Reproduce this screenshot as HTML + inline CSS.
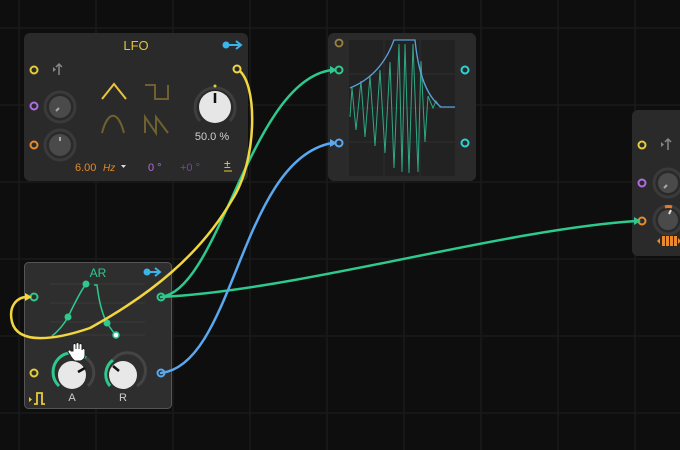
<!DOCTYPE html>
<html><head><meta charset="utf-8"><style>
html,body{margin:0;padding:0;background:#0e0e0e;width:680px;height:450px;overflow:hidden}
svg{display:block}
text{font-family:"Liberation Sans",sans-serif}
</style></head><body>
<svg width="680" height="450" viewBox="0 0 680 450" xmlns="http://www.w3.org/2000/svg">
<rect width="680" height="450" fill="#0e0e0e"/>
<g stroke="#1a1a1a" stroke-width="1.5">
<line x1="19" y1="0" x2="19" y2="450"/><line x1="96" y1="0" x2="96" y2="450"/><line x1="173" y1="0" x2="173" y2="450"/><line x1="250" y1="0" x2="250" y2="450"/><line x1="327" y1="0" x2="327" y2="450"/><line x1="404" y1="0" x2="404" y2="450"/><line x1="481" y1="0" x2="481" y2="450"/><line x1="558" y1="0" x2="558" y2="450"/><line x1="635" y1="0" x2="635" y2="450"/>
<line x1="0" y1="28" x2="680" y2="28"/><line x1="0" y1="105" x2="680" y2="105"/><line x1="0" y1="182" x2="680" y2="182"/><line x1="0" y1="259" x2="680" y2="259"/><line x1="0" y1="336" x2="680" y2="336"/><line x1="0" y1="413" x2="680" y2="413"/>
</g>

<!-- LFO panel -->
<rect x="24" y="33" width="224" height="148" rx="6" fill="#2a2a2a"/>
<text x="136" y="50" fill="#e0c23c" font-size="13" text-anchor="middle">LFO</text>
<circle cx="226" cy="45" r="3.5" fill="#3bb4e8"/><line x1="226" y1="45" x2="240" y2="45" stroke="#3bb4e8" stroke-width="2"/><path d="M236,41 L241,45 L236,49" fill="none" stroke="#3bb4e8" stroke-width="2"/>
<circle cx="34" cy="70" r="3.5" fill="none" stroke="#e6cc38" stroke-width="2"/>
<path d="M53,67 l3,2.5 l-3,2.5z" fill="#888"/><line x1="59" y1="64" x2="59" y2="75" stroke="#888" stroke-width="1.5"/><path d="M56,67 l3,-3 l3,3" fill="none" stroke="#888" stroke-width="1.5"/>
<circle cx="34" cy="106" r="3.5" fill="none" stroke="#b06ce0" stroke-width="2"/>
<circle cx="34" cy="145" r="3.5" fill="none" stroke="#ea8a2a" stroke-width="2"/>
<circle cx="60" cy="107" r="15" fill="none" stroke="#3a3a3a" stroke-width="3"/>
<circle cx="60" cy="107" r="11" fill="#4a4a4a"/><line x1="56" y1="111" x2="59" y2="108" stroke="#aaa" stroke-width="2"/>
<circle cx="60" cy="145" r="15" fill="none" stroke="#3a3a3a" stroke-width="3"/>
<circle cx="60" cy="145" r="11" fill="#4a4a4a"/><line x1="60" y1="137" x2="60" y2="141" stroke="#aaa" stroke-width="2"/>
<path d="M102,99 L114,84 L126,99" fill="none" stroke="#e8c43a" stroke-width="2"/>
<path d="M145,85 L155,85 L155,99 L168,99 L168,85" fill="none" stroke="#6e6130" stroke-width="2"/>
<path d="M102,133 C108,110 118,110 124,133" fill="none" stroke="#6e6130" stroke-width="2"/>
<path d="M145,133 L145,117 L156,133 L156,117 L168,133" fill="none" stroke="#6e6130" stroke-width="2"/>
<path d="M200,121 A20,20 0 1 1 230,121" fill="none" stroke="#3e3e3e" stroke-width="3"/>
<circle cx="215" cy="107" r="16" fill="#e6e6e6"/><line x1="215" y1="93" x2="215" y2="103" stroke="#111" stroke-width="2.5"/>
<circle cx="215" cy="86" r="1.5" fill="#e6cc38"/>
<text x="212" y="140" fill="#cfcfcf" font-size="11" text-anchor="middle">50.0 %</text>
<text x="75" y="171" fill="#e08a2a" font-size="11">6.00</text>
<text x="103" y="171" fill="#e08a2a" font-size="10" font-style="italic">Hz</text>
<path d="M121,165 l5,0 l-2.5,3z" fill="#ddd"/>
<text x="148" y="171" fill="#b06ce0" font-size="11">0 °</text>
<text x="180" y="171" fill="#6e4c88" font-size="11">+0 °</text>
<text x="224" y="168" fill="#e6cc38" font-size="12">±</text><line x1="224" y1="171" x2="232" y2="171" stroke="#e6cc38" stroke-width="1"/>

<!-- Scope panel -->
<rect x="328" y="33" width="148" height="148" rx="6" fill="#2a2a2a"/>
<rect x="349" y="40" width="106" height="136" fill="#222"/>
<g stroke="#2e2e2e" stroke-width="1"><line x1="349" y1="74" x2="455" y2="74"/><line x1="349" y1="108" x2="455" y2="108"/><line x1="349" y1="142" x2="455" y2="142"/><line x1="384" y1="40" x2="384" y2="176"/><line x1="420" y1="40" x2="420" y2="176"/></g>
<path d="M350,117 L352,88 L356,130 L361,81 L365,137 L370,76 L375,146 L380,70 L385,153 L390,62 L394,168 L399,44 L402,172 L405,44 L409,173 L413,44 L418,172 L421,61 L425,142 L428,96 L433,108 L436,101 L440,107 L455,107" fill="none" stroke="#2ea884" stroke-width="1"/>
<path d="M350,88 C370,80 385,65 394,40 L415,40 C418,70 425,95 441,107 L455,107" fill="none" stroke="#5aa0d8" stroke-width="1.3"/>
<circle cx="339" cy="43" r="3.5" fill="none" stroke="#9a8240" stroke-width="1.8"/>
<circle cx="339" cy="70" r="3.5" fill="none" stroke="#2dc98d" stroke-width="2"/>
<circle cx="339" cy="143" r="3.5" fill="none" stroke="#5aa8f0" stroke-width="2"/>
<circle cx="465" cy="70" r="3.5" fill="none" stroke="#2fd2d2" stroke-width="2"/>
<circle cx="465" cy="143" r="3.5" fill="none" stroke="#2fd2d2" stroke-width="2"/>

<!-- Right panel -->
<rect x="632" y="110" width="60" height="146" rx="6" fill="#2a2a2a"/>
<circle cx="642" cy="145" r="3.5" fill="none" stroke="#e6cc38" stroke-width="2"/>
<path d="M661,142 l3,2.5 l-3,2.5z" fill="#888"/><line x1="668" y1="139" x2="668" y2="150" stroke="#888" stroke-width="1.5"/><path d="M665,142 l3,-3 l3,3" fill="none" stroke="#888" stroke-width="1.5"/>
<circle cx="642" cy="183" r="3.5" fill="none" stroke="#b06ce0" stroke-width="2"/>
<circle cx="642" cy="221" r="3.5" fill="none" stroke="#ea8a2a" stroke-width="2"/>
<circle cx="668" cy="183" r="14" fill="none" stroke="#3a3a3a" stroke-width="3"/><circle cx="668" cy="183" r="10" fill="#4a4a4a"/>
<line x1="664" y1="188" x2="667" y2="185" stroke="#aaa" stroke-width="2"/>
<circle cx="668" cy="220" r="14" fill="none" stroke="#3a3a3a" stroke-width="3"/><circle cx="668" cy="220" r="10" fill="#4a4a4a"/>
<line x1="669" y1="214" x2="671" y2="210" stroke="#ddd" stroke-width="2"/>
<path d="M665,207 A14,14 0 0 1 672,207" stroke="#ea7a2a" stroke-width="3" fill="none"/>
<g fill="#ea8a2a"><rect x="662" y="236" width="3" height="10"/><rect x="666" y="236" width="3" height="10"/><rect x="670" y="236" width="3" height="10"/><rect x="674" y="236" width="3" height="10"/></g>
<path d="M657,241 l3,-3 v6z M681,241 l-3,-3 v6z" fill="#ea8a2a"/>

<!-- AR panel -->
<rect x="24.5" y="262.5" width="147" height="146" rx="4" fill="#2e2e2e" stroke="#555" stroke-width="1"/>
<text x="98" y="277" fill="#2dc98d" font-size="12" text-anchor="middle">AR</text>
<circle cx="147" cy="272" r="3.5" fill="#3bb4e8"/><line x1="147" y1="272" x2="159" y2="272" stroke="#3bb4e8" stroke-width="2"/><path d="M155,268 L160,272 L155,276" fill="none" stroke="#3bb4e8" stroke-width="2"/>
<g stroke="#3a3a3a" stroke-width="1"><line x1="50" y1="284" x2="145" y2="284"/><line x1="50" y1="303" x2="145" y2="303"/><line x1="50" y1="322" x2="145" y2="322"/><line x1="50" y1="335" x2="145" y2="335"/></g>
<path d="M52,336 Q62,328 68,317 Q80,292 86,284" fill="none" stroke="#2dc98d" stroke-width="1.5"/>
<path d="M94,285 L97,285 Q100,310 107,323 L116,336" fill="none" stroke="#2dc98d" stroke-width="1.5"/>
<circle cx="86" cy="284" r="3.5" fill="#2dc98d"/><circle cx="68" cy="317" r="3.5" fill="#2dc98d"/><circle cx="107" cy="323" r="3.5" fill="#2dc98d"/>
<circle cx="116" cy="335" r="3" fill="#fff" stroke="#2dc98d" stroke-width="1.5"/>
<circle cx="34" cy="297" r="3.5" fill="none" stroke="#2dc98d" stroke-width="2"/>
<circle cx="161" cy="297" r="3.5" fill="none" stroke="#2dc98d" stroke-width="2"/>
<circle cx="161" cy="373" r="3.5" fill="none" stroke="#5aa8f0" stroke-width="2"/>
<circle cx="34" cy="373" r="3.5" fill="none" stroke="#e6cc38" stroke-width="2"/>
<path d="M29,397 l3,2.5 l-3,2.5z" fill="#e6cc38"/><path d="M34,404 L37,404 L37,393 L42,393 L42,404 L45,404" fill="none" stroke="#e6cc38" stroke-width="1.8"/>
<path d="M59,386 A18,18 0 0 1 86,358" fill="none" stroke="#2dc98d" stroke-width="3"/>
<path d="M86,358 A18,18 0 0 1 88,386" fill="none" stroke="#444" stroke-width="3"/>
<circle cx="72" cy="375" r="14" fill="#e8e8e8"/><line x1="78" y1="372" x2="85" y2="368" stroke="#111" stroke-width="2.5"/>
<text x="72" y="401" fill="#cfcfcf" font-size="11" text-anchor="middle">A</text>
<path d="M110,386 A18,18 0 0 1 113,360" fill="none" stroke="#2dc98d" stroke-width="3"/>
<path d="M113,360 A18,18 0 1 1 137,386" fill="none" stroke="#444" stroke-width="3"/>
<circle cx="123" cy="375" r="14" fill="#e8e8e8"/><line x1="119" y1="371" x2="113" y2="366" stroke="#111" stroke-width="2.5"/>
<text x="123" y="401" fill="#cfcfcf" font-size="11" text-anchor="middle">R</text>
<path d="M73,351 l0,-6 a1.5,1.5 0 0 1 3,0 l0,4 l0,-5 a1.5,1.5 0 0 1 3,0 l0,5 l0,-4 a1.5,1.5 0 0 1 3,0 l0,5 a1.5,1.5 0 0 1 3,0 l0,5 q0,5 -5,6 l-5,0 q-3,-2 -5,-6 l-2,-3 a1.5,1.5 0 0 1 3,-1z" fill="#fff" stroke="#222" stroke-width="1"/>

<!-- cables -->
<g fill="none" stroke-width="2.5" stroke-linecap="round">
<path d="M161,297 C220,290 250,80 332,70" stroke="#2dc98d"/>
<path d="M161,297 C300,290 500,230 636,221" stroke="#2dc98d"/>
<path d="M161,373 C235,365 240,160 332,143" stroke="#5aa8f0"/>
<path d="M237,69 C258,80 258,160 232,200 C200,255 150,295 90,328 C55,340 18,345 12,322 C8,305 18,297 27,297" stroke="#f2d640"/>
</g>
<path d="M330,66 L337,70 L330,74z" fill="#2dc98d"/>
<path d="M634,217 L641,221 L634,225z" fill="#2dc98d"/>
<path d="M330,139 L337,143 L330,147z" fill="#5aa8f0"/>
<path d="M25,293 L32,297 L25,301z" fill="#f2d640"/>
<circle cx="237" cy="69" r="3.5" fill="#2a2a2a" stroke="#f2d640" stroke-width="2"/>
</svg>
</body></html>
